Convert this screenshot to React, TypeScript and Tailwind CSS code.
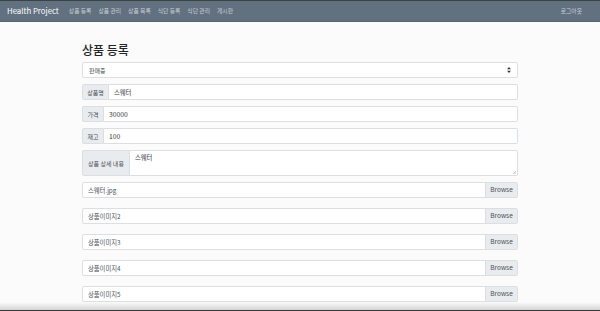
import React from 'react';

const navLinks = ["상품 등록", "상품 관리", "상품 목록", "식단 등록", "식단 관리", "게시판"];

const fileNames = ["스웨터.jpg", "상품이미지2", "상품이미지3", "상품이미지4", "상품이미지5"];

const font = { fontFamily: '"Noto Sans CJK KR", "Noto Sans", sans-serif' };

const App: React.FC = () => {
  return (
    <div className="w-[600px] h-[311px] overflow-hidden bg-[#fbfbfb] flex flex-col" style={font}>
      <div className="h-[1px] bg-[#3d4246]" />
      <nav className="h-[22px] bg-[#617180] flex items-center px-[7px] border-b border-[#56646f]">
        <span className="text-[7.8px] text-white mr-[10px] leading-none">Health Project</span>
        <div className="flex gap-[7px]">
          {navLinks.map((link) => (
            <span key={link} className="text-[5.8px] text-[#c9ced3] leading-none">
              {link}
            </span>
          ))}
        </div>
        <span className="ml-auto mr-[11px] text-[5.8px] text-[#c9ced3] leading-none">로그아웃</span>
      </nav>

      <div className="w-[436px] mx-auto flex-1 flex flex-col text-[6px] text-[#495057]">
        <h3 className="text-[12px] font-medium text-[#212529] mt-[22px] leading-none">상품 등록</h3>

        <div className="mt-[6px] h-[16px] bg-white border border-[#dcdfe2] rounded-[2px] flex items-center px-[6px]">
          <span>판매중</span>
          <svg className="ml-auto" width="4" height="6" viewBox="0 0 4 6">
            <path d="M2 0 L4 2.2 L0 2.2 Z M2 6 L4 3.8 L0 3.8 Z" fill="#343a40" />
          </svg>
        </div>

        <div className="mt-[6px] h-[16px] flex">
          <span className="w-[27px] bg-[#e9ecef] border border-[#dcdfe2] rounded-l-[2px] flex items-center justify-center">상품명</span>
          <span className="flex-1 bg-white border border-l-0 border-[#dcdfe2] rounded-r-[2px] flex items-center px-[5px] text-[6.3px] text-[#343a40]">스웨터</span>
        </div>

        <div className="mt-[6px] h-[16px] flex">
          <span className="w-[22px] bg-[#e9ecef] border border-[#dcdfe2] rounded-l-[2px] flex items-center justify-center">가격</span>
          <span className="flex-1 bg-white border border-l-0 border-[#dcdfe2] rounded-r-[2px] flex items-center px-[5px] text-[6.8px] text-[#343a40]">30000</span>
        </div>

        <div className="mt-[6px] h-[16px] flex">
          <span className="w-[22px] bg-[#e9ecef] border border-[#dcdfe2] rounded-l-[2px] flex items-center justify-center">재고</span>
          <span className="flex-1 bg-white border border-l-0 border-[#dcdfe2] rounded-r-[2px] flex items-center px-[5px] text-[6.8px] text-[#343a40]">100</span>
        </div>

        <div className="mt-[6px] h-[26px] flex">
          <span className="w-[48px] bg-[#e9ecef] border border-[#dcdfe2] rounded-l-[2px] flex items-center justify-center">상품 상세 내용</span>
          <span className="flex-1 bg-white border border-l-0 border-[#dcdfe2] rounded-r-[2px] px-[5px] pt-[2px] relative text-[6.3px] text-[#343a40]">
            스웨터
            <svg className="absolute right-[1px] bottom-[1px]" width="3" height="3" viewBox="0 0 3 3">
              <path d="M0 3 L3 0 M1.5 3 L3 1.5" stroke="#999" strokeWidth="0.5" />
            </svg>
          </span>
        </div>

        {fileNames.map((name, i) => (
          <div
            key={name}
            className={`${i === 0 ? "mt-[6px]" : "mt-[10px]"} h-[16px] flex bg-white border border-[#dcdfe2] rounded-[2px]`}
          >
            <span className="flex-1 flex items-center px-[5px] text-[6.3px]">{name}</span>
            <span className="w-[32px] bg-[#e9ecef] border-l border-[#dcdfe2] flex items-center justify-center text-[6.5px]">Browse</span>
          </div>
        ))}
      </div>

      <div className="h-[8px] bg-gradient-to-b from-transparent to-[#d4d4d4]" />
      <div className="h-[1px] bg-[#3a3a3a]" />
    </div>
  );
};

export default App;
